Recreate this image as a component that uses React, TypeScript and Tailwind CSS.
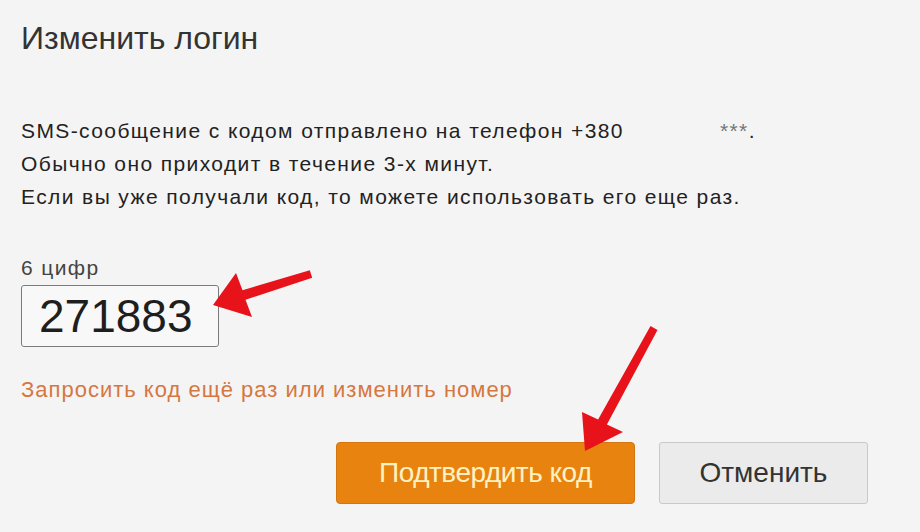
const font = "font-['Liberation_Sans',Arial,sans-serif]";

function Arrows() {
  return (
    <svg className="pointer-events-none absolute inset-0" width="920" height="532" viewBox="0 0 920 532">
      <polygon
        points="309.8,270.2 242.5,290.2 236,273 213,305 252,317 245.5,299.8 312.2,277.8"
        fill="#e8121a"
      />
      <polygon
        points="650.5,326 598.1,419.6 582,412 585,451 623,432 606.9,424.4 657.5,330"
        fill="#e8121a"
      />
    </svg>
  );
}

export default function App() {
  return (
    <div className={`relative h-[532px] w-[920px] overflow-hidden bg-[#f5f4f4] ${font} text-[#222]`}>
      <div className="flex flex-col pl-[21px] pt-[18px]">
        <h1 className="text-[32px] leading-[40px] font-normal text-[#333]">Изменить логин</h1>

        <div className="mt-[56px] flex flex-col text-[21px] leading-[33px] tracking-[1.4px]">
          <p>
            SMS-сообщение с кодом отправлено на телефон +380
            <span className="inline-block w-[96px]" />
            <span className="text-[#777]">***</span>.
          </p>
          <p>Обычно оно приходит в течение 3-х минут.</p>
          <p>Если вы уже получали код, то можете использовать его еще раз.</p>
        </div>

        <label className="mt-[44px] text-[21px] leading-[22px] tracking-[1.4px] text-[#444]">6 цифр</label>
        <div className="mt-[6px] flex h-[62px] w-[198px] items-center rounded-[3px] border border-[#7a7a7a] bg-[#f8f8f8] pl-[17px] text-[46px] text-[#1e1e1e]">
          271883
        </div>

        <a className="mt-[30px] text-[22px] leading-[26px] tracking-[1px] text-[#d5773f]">
          Запросить код ещё раз или изменить номер
        </a>

        <div className="mt-[39px] flex gap-[24px] pl-[315px]">
          <button className="flex h-[62px] w-[299px] items-center justify-center rounded-[4px] border border-[#d47510] bg-[#e8830f] text-[28px] tracking-[-0.5px] text-[#fff2c2]">
            Подтвердить код
          </button>
          <button className="flex h-[62px] w-[209px] items-center justify-center rounded-[3px] border border-[#c9c9c9] bg-[#ebebeb] text-[28px] text-[#333]">
            Отменить
          </button>
        </div>
      </div>
      <Arrows />
    </div>
  );
}
